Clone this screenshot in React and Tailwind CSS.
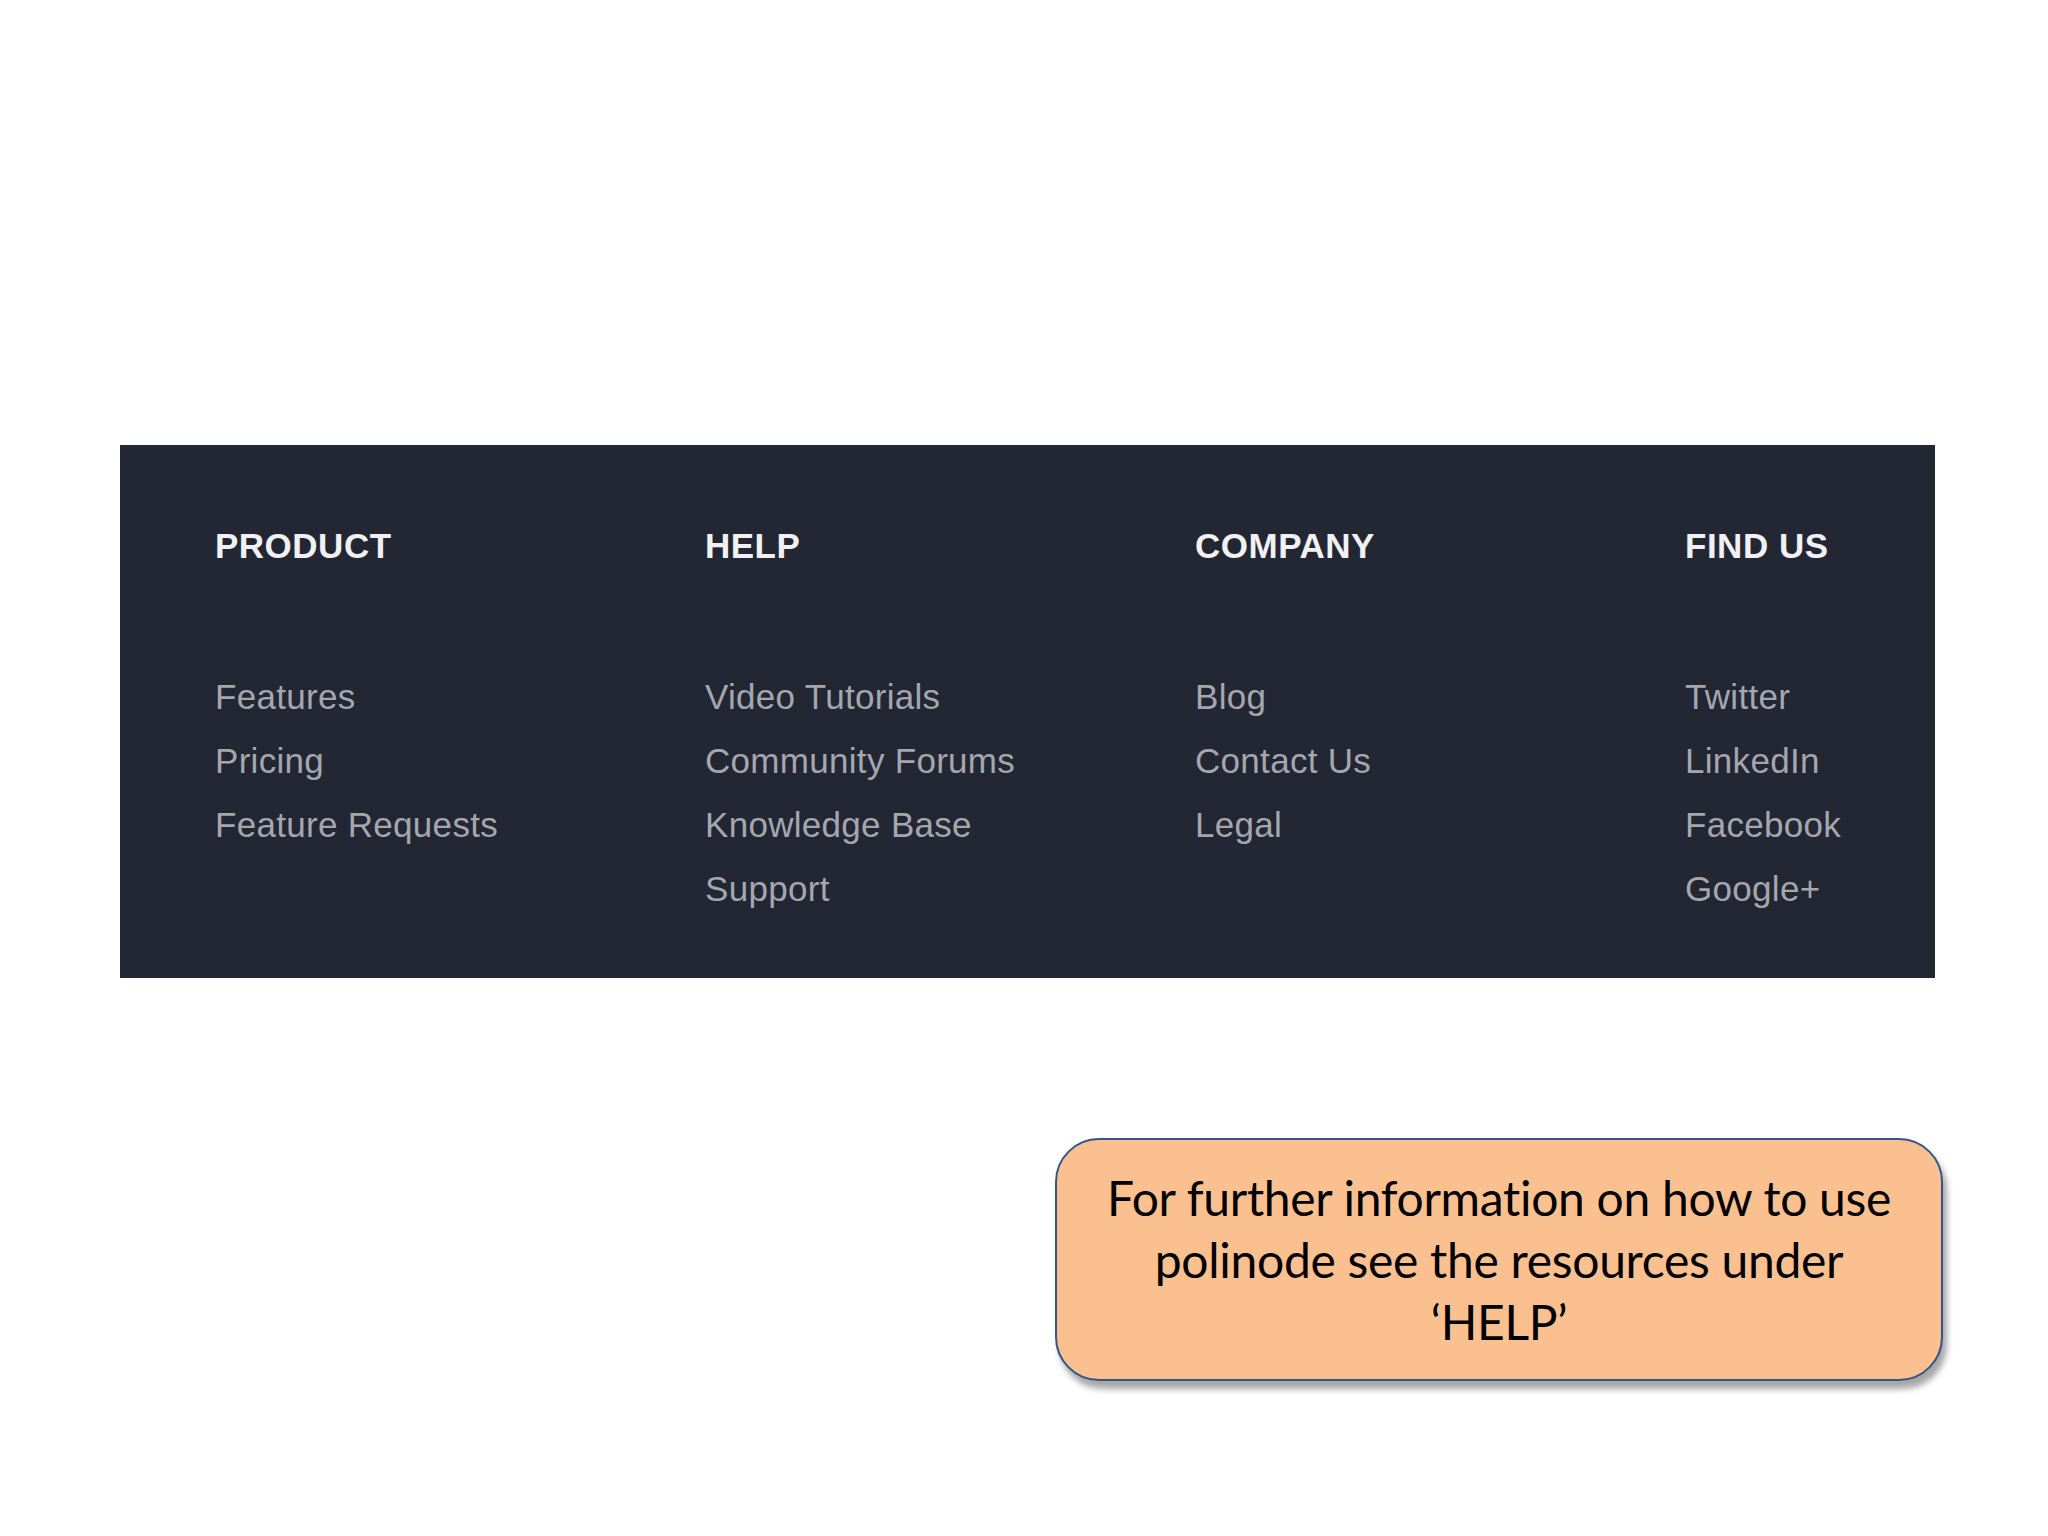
const columns = [
  { title: "PRODUCT", links: ["Features", "Pricing", "Feature Requests"] },
  { title: "HELP", links: ["Video Tutorials", "Community Forums", "Knowledge Base", "Support"] },
  { title: "COMPANY", links: ["Blog", "Contact Us", "Legal"] },
  { title: "FIND US", links: ["Twitter", "LinkedIn", "Facebook", "Google+"] },
];

export default function App() {
  return (
    <div className="w-[2048px] h-[1536px] bg-white overflow-hidden">
      {/* footer screenshot */}
      <div className="ml-[120px] mt-[445px] w-[1815px] h-[533px] bg-[#232633] pl-[95px] pt-[81px] font-['Liberation_Sans',Arial,sans-serif] overflow-hidden">
        <div className="grid grid-cols-[490px_490px_490px_1fr]">
          {columns.map((col) => (
            <div key={col.title}>
              <h3 className="text-[35px] leading-[40px] font-bold text-[#f1f1f3] tracking-[0.5px]">
                {col.title}
              </h3>
              <ul className="mt-[99px]">
                {col.links.map((l) => (
                  <li key={l} className="text-[35px] leading-[64px] text-[#a4a7ae] tracking-[0.3px]">
                    {l}
                  </li>
                ))}
              </ul>
            </div>
          ))}
        </div>
      </div>

      {/* callout */}
      <div className="ml-[1055px] mt-[160px] w-[888px] h-[243px] rounded-[44px] border-2 border-[#34558a] bg-[#fac090] shadow-[4px_8px_6px_rgba(0,0,0,0.35)] flex items-center justify-center px-6">
        <p className="text-center text-black text-[48px] leading-[62px] tracking-[-0.3px] font-['Lato','Open_Sans',sans-serif]">
          For further information on how to use
          <br />
          polinode see the resources under
          <br />
          ‘HELP’
        </p>
      </div>
    </div>
  );
}
